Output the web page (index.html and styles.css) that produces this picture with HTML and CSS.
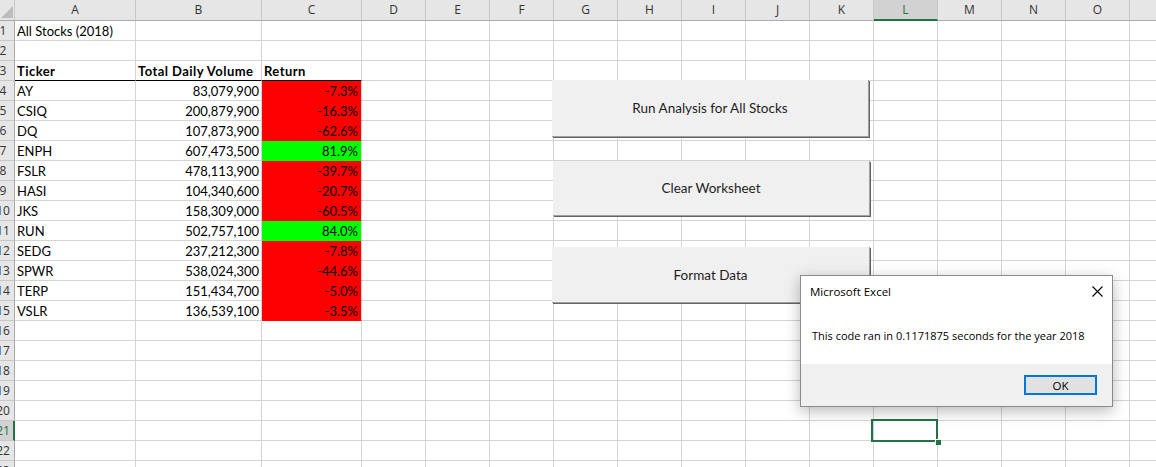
FILE: index.html
```html
<!DOCTYPE html>
<html>
<head>
<meta charset="utf-8">
<title>All Stocks (2018)</title>
<link rel="stylesheet" href="styles.css">
</head>
<body>
<div class="sheet">
  <div class="corner"><span class="tri"></span></div>
  <div class="ch">A</div><div class="ch">B</div><div class="ch">C</div><div class="ch">D</div><div class="ch">E</div><div class="ch">F</div><div class="ch">G</div><div class="ch">H</div><div class="ch">I</div><div class="ch">J</div><div class="ch">K</div><div class="ch sel">L</div><div class="ch">M</div><div class="ch">N</div><div class="ch">O</div><div class="ch"></div>

  <div class="rh"><span>1</span></div><div class="t">All Stocks (2018)</div><div></div><div></div><div></div><div></div><div></div><div></div><div></div><div></div><div></div><div></div><div></div><div></div><div></div><div></div><div></div>
  <div class="rh"><span>2</span></div><div></div><div></div><div></div><div></div><div></div><div></div><div></div><div></div><div></div><div></div><div></div><div></div><div></div><div></div><div></div><div></div>
  <div class="rh"><span>3</span></div><div class="t hd">Ticker</div><div class="t hd">Total Daily Volume</div><div class="t hd">Return</div><div></div><div></div><div></div><div></div><div></div><div></div><div></div><div></div><div></div><div></div><div></div><div></div><div></div>

  <div class="rh"><span>4</span></div><div class="t">AY</div><div class="n">83,079,900</div><div class="p neg">-7.3%</div><div></div><div></div><div></div><div></div><div></div><div></div><div></div><div></div><div></div><div></div><div></div><div></div><div></div>
  <div class="rh"><span>5</span></div><div class="t">CSIQ</div><div class="n">200,879,900</div><div class="p neg">-16.3%</div><div></div><div></div><div></div><div></div><div></div><div></div><div></div><div></div><div></div><div></div><div></div><div></div><div></div>
  <div class="rh"><span>6</span></div><div class="t">DQ</div><div class="n">107,873,900</div><div class="p neg">-62.6%</div><div></div><div></div><div></div><div></div><div></div><div></div><div></div><div></div><div></div><div></div><div></div><div></div><div></div>
  <div class="rh"><span>7</span></div><div class="t">ENPH</div><div class="n">607,473,500</div><div class="p pos">81.9%</div><div></div><div></div><div></div><div></div><div></div><div></div><div></div><div></div><div></div><div></div><div></div><div></div><div></div>
  <div class="rh"><span>8</span></div><div class="t">FSLR</div><div class="n">478,113,900</div><div class="p neg">-39.7%</div><div></div><div></div><div></div><div></div><div></div><div></div><div></div><div></div><div></div><div></div><div></div><div></div><div></div>
  <div class="rh"><span>9</span></div><div class="t">HASI</div><div class="n">104,340,600</div><div class="p neg">-20.7%</div><div></div><div></div><div></div><div></div><div></div><div></div><div></div><div></div><div></div><div></div><div></div><div></div><div></div>
  <div class="rh"><span>10</span></div><div class="t">JKS</div><div class="n">158,309,000</div><div class="p neg">-60.5%</div><div></div><div></div><div></div><div></div><div></div><div></div><div></div><div></div><div></div><div></div><div></div><div></div><div></div>
  <div class="rh"><span>11</span></div><div class="t">RUN</div><div class="n">502,757,100</div><div class="p pos">84.0%</div><div></div><div></div><div></div><div></div><div></div><div></div><div></div><div></div><div></div><div></div><div></div><div></div><div></div>
  <div class="rh"><span>12</span></div><div class="t">SEDG</div><div class="n">237,212,300</div><div class="p neg">-7.8%</div><div></div><div></div><div></div><div></div><div></div><div></div><div></div><div></div><div></div><div></div><div></div><div></div><div></div>
  <div class="rh"><span>13</span></div><div class="t">SPWR</div><div class="n">538,024,300</div><div class="p neg">-44.6%</div><div></div><div></div><div></div><div></div><div></div><div></div><div></div><div></div><div></div><div></div><div></div><div></div><div></div>
  <div class="rh"><span>14</span></div><div class="t">TERP</div><div class="n">151,434,700</div><div class="p neg">-5.0%</div><div></div><div></div><div></div><div></div><div></div><div></div><div></div><div></div><div></div><div></div><div></div><div></div><div></div>
  <div class="rh"><span>15</span></div><div class="t">VSLR</div><div class="n">136,539,100</div><div class="p neg">-3.5%</div><div></div><div></div><div></div><div></div><div></div><div></div><div></div><div></div><div></div><div></div><div></div><div></div><div></div>

  <div class="rh"><span>16</span></div><div></div><div></div><div></div><div></div><div></div><div></div><div></div><div></div><div></div><div></div><div></div><div></div><div></div><div></div><div></div><div></div>
  <div class="rh"><span>17</span></div><div></div><div></div><div></div><div></div><div></div><div></div><div></div><div></div><div></div><div></div><div></div><div></div><div></div><div></div><div></div><div></div>
  <div class="rh"><span>18</span></div><div></div><div></div><div></div><div></div><div></div><div></div><div></div><div></div><div></div><div></div><div></div><div></div><div></div><div></div><div></div><div></div>
  <div class="rh"><span>19</span></div><div></div><div></div><div></div><div></div><div></div><div></div><div></div><div></div><div></div><div></div><div></div><div></div><div></div><div></div><div></div><div></div>
  <div class="rh"><span>20</span></div><div></div><div></div><div></div><div></div><div></div><div></div><div></div><div></div><div></div><div></div><div></div><div></div><div></div><div></div><div></div><div></div>
  <div class="rh sel"><span>21</span></div><div></div><div></div><div></div><div></div><div></div><div></div><div></div><div></div><div></div><div></div><div></div><div></div><div></div><div></div><div></div><div></div>
  <div class="rh"><span>22</span></div><div></div><div></div><div></div><div></div><div></div><div></div><div></div><div></div><div></div><div></div><div></div><div></div><div></div><div></div><div></div><div></div>
  <div class="rh"><span>23</span></div><div></div><div></div><div></div><div></div><div></div><div></div><div></div><div></div><div></div><div></div><div></div><div></div><div></div><div></div><div></div><div></div>
</div>

<div class="btn btn-run">Run Analysis for All Stocks</div>
<div class="btn btn-clear">Clear Worksheet</div>
<div class="btn btn-format">Format Data</div>

<div class="selection"><span class="handle"></span></div>

<div class="dialog">
  <div class="dlg-title">
    <span>Microsoft Excel</span>
    <svg class="dlg-close" width="11" height="11" viewBox="0 0 11 11"><path d="M0.5 0.5 L10.5 10.5 M10.5 0.5 L0.5 10.5" stroke="#000" stroke-width="1.1" fill="none"/></svg>
  </div>
  <div class="dlg-body">This code ran in 0.1171875 seconds for the year 2018</div>
  <div class="dlg-foot"><div class="dlg-ok">OK</div></div>
</div>
</body>
</html>
```

FILE: styles.css
```css
html, body {
  margin: 0;
  padding: 0;
  background: #fff;
  overflow: hidden;
}
body {
  width: 1156px;
  height: 467px;
  position: relative;
  font-family: Lato, "Open Sans", sans-serif;
}

.sheet {
  display: grid;
  grid-template-columns: 15px 121px 126px 100px repeat(12, 64px) 64px;
  grid-template-rows: 21px;
  grid-auto-rows: 20px;
}
.sheet > div {
  box-sizing: border-box;
  border-right: 1px solid #d4d4d4;
  border-bottom: 1px solid #d4d4d4;
  font-size: 13px;
  line-height: 20px;
  white-space: nowrap;
  color: #000;
}

/* headers */
.sheet > .corner {
  background: #e6e6e6;
  border-right-color: #c8c8c8;
  border-bottom-color: #ababab;
  display: flex;
  align-items: flex-end;
  justify-content: flex-end;
  padding: 0 1px 2px 0;
}
.tri {
  width: 0;
  height: 0;
  border-left: 12px solid transparent;
  border-bottom: 12px solid #bcbcbc;
}
.sheet > .ch {
  background: #e6e6e6;
  border-right-color: #c8c8c8;
  border-bottom-color: #ababab;
  font-family: "Open Sans", sans-serif;
  font-size: 12px;
  line-height: 20px;
  text-align: center;
  color: #333;
}
.sheet > .ch.sel {
  background: #d2d2d2;
  color: #217346;
  border-bottom: 2px solid #217346;
}
.sheet > .rh {
  background: #e6e6e6;
  border-right-color: #a8a8a8;
  border-bottom-color: #c8c8c8;
  overflow: hidden;
  font-family: "Open Sans", sans-serif;
  font-size: 12px;
  line-height: 20px;
  color: #333;
}
.rh span {
  display: block;
  width: 26px;
  margin-left: -10px;
  text-align: center;
}
.sheet > .rh.sel {
  background: #d2d2d2;
  color: #217346;
  border-right: 2px solid #217346;
}

/* cells */
.sheet > .t {
  padding-left: 2px;
}
.sheet > .hd {
  font-weight: bold;
  letter-spacing: 0.45px;
  border-bottom-color: #000;
}
.sheet > .n {
  text-align: right;
  padding-right: 2px;
}
.sheet > .p {
  text-align: right;
  padding-right: 3px;
}
.sheet > .neg {
  background: #ff0000;
  border-bottom-color: #ff0000;
}
.sheet > .pos {
  background: #00ff00;
  border-bottom-color: #00ff00;
}

/* form buttons floating on the sheet */
.btn {
  position: absolute;
  box-sizing: border-box;
  background: #f0f0f0;
  border-right: 1px solid #a0a0a0;
  border-bottom: 1px solid #a0a0a0;
  box-shadow: 1px 1px 0 #646464;
  display: flex;
  align-items: center;
  justify-content: center;
  font-size: 13.5px;
  color: #1e1e1e;
}
.btn-run { left: 552px; top: 80px; width: 317px; height: 57px; }
.btn-clear { left: 553px; top: 161px; width: 317px; height: 55px; }
.btn-format { left: 552px; top: 247px; width: 318px; height: 56px; }

/* active cell L21 */
.selection {
  position: absolute;
  left: 871px;
  top: 419px;
  width: 63px;
  height: 19px;
  border: 2px solid #217346;
}
.handle {
  position: absolute;
  right: -5px;
  bottom: -5px;
  width: 5px;
  height: 5px;
  background: #217346;
  border: 1px solid #fff;
  border-width: 1px 0 0 1px;
}

/* message box */
.dialog {
  position: absolute;
  left: 800px;
  top: 275px;
  width: 313px;
  height: 132px;
  box-sizing: border-box;
  border: 1px solid #8a8a8a;
  background: #fff;
  box-shadow: 0 4px 14px rgba(0, 0, 0, 0.28);
  display: flex;
  flex-direction: column;
  font-family: "Open Sans", sans-serif;
  font-size: 11px;
  color: #000;
}
.dlg-title {
  height: 30px;
  display: flex;
  align-items: center;
  justify-content: space-between;
  padding: 0 9px 0 9px;
  font-size: 11.5px;
}
.dlg-close {
  display: block;
}
.dlg-body {
  flex: 1;
  display: flex;
  align-items: center;
  padding-left: 11px;
}
.dlg-foot {
  height: 42px;
  background: #f0f0f0;
  display: flex;
  justify-content: flex-end;
  align-items: flex-start;
  padding: 11px 15px 0 0;
  box-sizing: border-box;
}
.dlg-ok {
  width: 73px;
  height: 20px;
  box-sizing: border-box;
  border: 2px solid #0078d7;
  background: #e1e1e1;
  display: flex;
  align-items: center;
  justify-content: center;
  font-size: 11.5px;
}
```
